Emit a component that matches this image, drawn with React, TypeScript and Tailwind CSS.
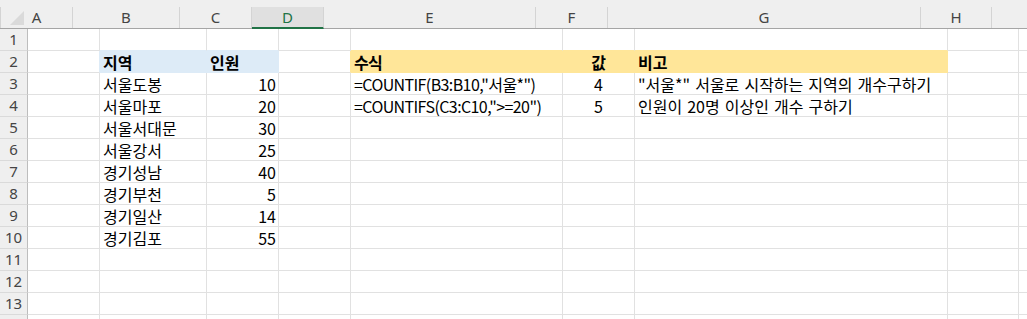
import React from "react";

type Fill = "blue" | "yellow";
type Cell = { t: string; a?: "l" | "r" | "c"; b?: boolean };

const cols = [
  { key: "A", w: "w-[72px]" },
  { key: "B", w: "w-[107px]" },
  { key: "C", w: "w-[72px]" },
  { key: "D", w: "w-[72px]" },
  { key: "E", w: "w-[212px]" },
  { key: "F", w: "w-[72px]" },
  { key: "G", w: "w-[313px]" },
  { key: "H", w: "w-[71px]" },
  { key: "I", w: "w-[72px]" },
];

const data: Record<number, Record<string, Cell>> = {
  2: {
    B: { t: "지역", b: true },
    C: { t: "인원", b: true },
    E: { t: "수식", b: true },
    F: { t: "값", b: true, a: "c" },
    G: { t: "비고", b: true },
  },
  3: {
    B: { t: "서울도봉" },
    C: { t: "10", a: "r" },
    E: { t: '=COUNTIF(B3:B10,"서울*")' },
    F: { t: "4", a: "c" },
    G: { t: '"서울*" 서울로 시작하는 지역의 개수구하기' },
  },
  4: {
    B: { t: "서울마포" },
    C: { t: "20", a: "r" },
    E: { t: '=COUNTIFS(C3:C10,">=20")' },
    F: { t: "5", a: "c" },
    G: { t: "인원이 20명 이상인 개수 구하기" },
  },
  5: { B: { t: "서울서대문" }, C: { t: "30", a: "r" } },
  6: { B: { t: "서울강서" }, C: { t: "25", a: "r" } },
  7: { B: { t: "경기성남" }, C: { t: "40", a: "r" } },
  8: { B: { t: "경기부천" }, C: { t: "5", a: "r" } },
  9: { B: { t: "경기일산" }, C: { t: "14", a: "r" } },
  10: { B: { t: "경기김포" }, C: { t: "55", a: "r" } },
};

// cell fills: B2:C2 blue, E2:G2 yellow
const fills: Record<string, Fill> = {
  B2: "blue",
  C2: "blue",
  E2: "yellow",
  F2: "yellow",
  G2: "yellow",
};

const bg = { blue: "bg-[#ddebf7]", yellow: "bg-[#ffe699]" };
const br = { blue: "border-r-[#ddebf7]", yellow: "border-r-[#ffe699]", none: "border-r-[#e1e1e1]" };
const bb = { blue: "border-b-[#ddebf7]", yellow: "border-b-[#ffe699]", none: "border-b-[#e1e1e1]" };
const align = { l: "justify-start pl-[3px]", r: "justify-end pr-[2px]", c: "justify-center" };

const font = { fontFamily: '"Noto Sans CJK KR", sans-serif' };
const hfont = { fontFamily: '"Noto Sans", "Liberation Sans", sans-serif' };

const fillAt = (col: string, row: number): Fill | undefined => fills[col + row];

const ColumnHeader = () => (
  <div className="flex h-[29px] bg-[#efefef] pt-[7px] border-b border-b-[#a5a5a5]">
    <div className="relative w-[28px] h-[21px] border-r border-r-[#d4d4d4]">
      <div className="absolute left-[10px] top-[4px] w-0 h-0 border-l-[14px] border-l-transparent border-b-[14px] border-b-[#dadada]" />
    </div>
    {cols.map((c) =>
      c.key === "D" ? (
        <div
          key={c.key}
          className={`${c.w} h-[22px] -mb-px shrink-0 flex items-center justify-center bg-[#e0e0e0] border-r border-r-[#d4d4d4] border-b-2 border-b-[#217346] text-[15px] text-[#217346]`}
          style={hfont}
        >
          {c.key}
        </div>
      ) : (
        <div
          key={c.key}
          className={`${c.w} h-[21px] shrink-0 flex items-center justify-center border-r border-r-[#d4d4d4] text-[15px] text-[#444444]`}
          style={hfont}
        >
          {c.key === "I" ? "" : c.key}
        </div>
      )
    )}
  </div>
);

const Row = ({ n }: { n: number }) => (
  <div className="flex h-[22px]">
    <div
      className="w-[28px] shrink-0 flex items-center justify-center bg-[#efefef] border-r border-r-[#bdbdbd] border-b border-b-[#dadada] text-[15px] text-[#444444]"
      style={hfont}
    >
      {n <= 13 ? n : ""}
    </div>
    {cols.map((c, i) => {
      const cell = data[n]?.[c.key];
      const f = fillAt(c.key, n);
      const next = cols[i + 1] ? fillAt(cols[i + 1].key, n) : undefined;
      const below = fillAt(c.key, n + 1);
      const rk = f ?? next ?? "none";
      const bk = f ?? below ?? "none";
      return (
        <div
          key={c.key}
          className={`${c.w} shrink-0 flex items-center overflow-visible whitespace-nowrap border-r border-b ${br[rk]} ${bb[bk]} ${f ? bg[f] : "bg-white"} ${align[cell?.a ?? "l"]} text-[16px] text-black ${cell?.b ? "font-bold" : ""} ${c.key === "E" ? "tracking-[-0.6px]" : ""} ${c.key === "G" ? "[word-spacing:1.5px]" : ""}`}
          style={font}
        >
          {cell?.t}
        </div>
      );
    })}
  </div>
);

export default function App() {
  return (
    <div className="w-[1027px] h-[319px] overflow-hidden bg-white select-none">
      <ColumnHeader />
      {Array.from({ length: 14 }, (_, i) => (
        <Row key={i} n={i + 1} />
      ))}
    </div>
  );
}
